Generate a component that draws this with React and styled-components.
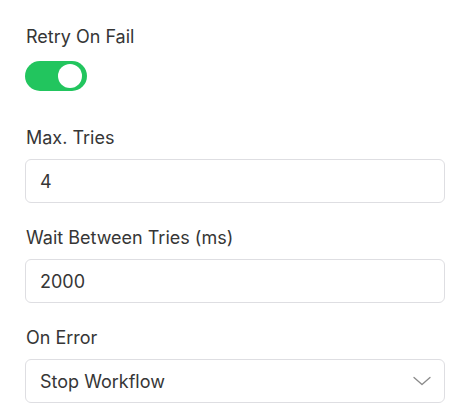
import React, { useState } from 'react';
import styled, { createGlobalStyle } from 'styled-components';

const GlobalStyle = createGlobalStyle`
	html, body {
		margin: 0;
		padding: 0;
		background: #ffffff;
	}
	body {
		font-family: Inter, 'Liberation Sans', sans-serif;
		color: #363636;
	}
`;

const App = () => {
	const [retry, setRetry] = useState(true);

	return (
		<>
			<GlobalStyle />
			<Panel>
				<Field spaced>
					<Label>Retry On Fail</Label>
					<Toggle on={retry} onClick={() => setRetry(!retry)}>
						<Knob on={retry} />
					</Toggle>
				</Field>
				<Field>
					<Label>Max. Tries</Label>
					<Input defaultValue="4" />
				</Field>
				<Field>
					<Label>Wait Between Tries (ms)</Label>
					<Input defaultValue="2000" />
				</Field>
				<Field>
					<Label>On Error</Label>
					<SelectBox>
						<span>Stop Workflow</span>
						<svg width="18" height="10" viewBox="0 0 18 10" fill="none">
							<path d="M1 1.5L9 8.5L17 1.5" stroke="#8a8a8a" strokeWidth="1.3" strokeLinecap="round" strokeLinejoin="round" />
						</svg>
					</SelectBox>
				</Field>
			</Panel>
		</>
	);
};

const Panel = styled.div`
	display: flex;
	flex-direction: column;
	gap: 23px;
	width: 420px;
	padding: 25px 0 0 25px;
`;

const Field = styled.div`
	display: flex;
	flex-direction: column;
	align-items: flex-start;
	gap: 9px;
	margin-bottom: ${({ spaced }) => (spaced ? '12px' : '0')};
`;

const Label = styled.div`
	font-size: 18px;
	line-height: 24px;
	color: #363636;
	padding-left: 1px;
`;

const Toggle = styled.div`
	width: 62px;
	height: 30px;
	border-radius: 15px;
	background-color: ${({ on }) => (on ? '#22c55e' : '#d4d4d8')};
	position: relative;
	cursor: pointer;
	margin-top: 3px;
`;

const Knob = styled.div`
	position: absolute;
	top: 3px;
	left: ${({ on }) => (on ? '33px' : '3px')};
	width: 24px;
	height: 24px;
	border-radius: 50%;
	background: #ffffff;
`;

const Input = styled.input`
	box-sizing: border-box;
	width: 420px;
	height: 44px;
	border: 1.5px solid #dedee2;
	border-radius: 6px;
	padding: 0 14px;
	font-family: Inter, 'Liberation Sans', sans-serif;
	font-size: 18px;
	color: #363636;
	outline: none;
`;

const SelectBox = styled.div`
	box-sizing: border-box;
	width: 420px;
	height: 44px;
	border: 1.5px solid #dedee2;
	border-radius: 6px;
	padding: 0 13px 0 14px;
	display: flex;
	align-items: center;
	justify-content: space-between;
	font-size: 18px;
	color: #363636;
	cursor: pointer;
`;

export default App;
